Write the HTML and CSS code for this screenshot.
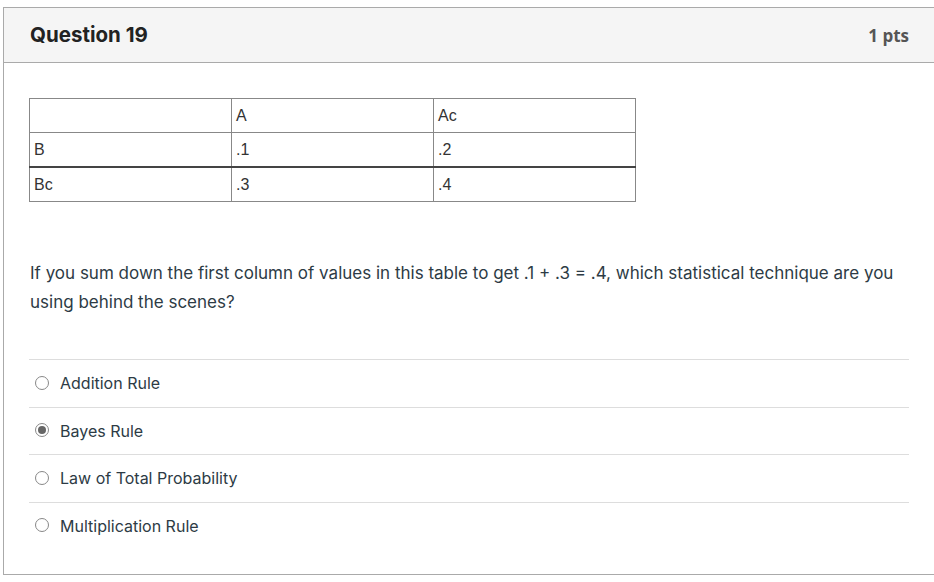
FILE: index.html
```html
<!DOCTYPE html>
<html>
<head>
<meta charset="utf-8">
<link rel="stylesheet" href="styles.css">
</head>
<body>
<div class="question">
  <div class="q-header">
    <span class="q-title">Question 19</span>
    <span class="q-pts">1 pts</span>
  </div>
  <div class="q-body">
    <table class="grid">
      <tr><td></td><td>A</td><td>Ac</td></tr>
      <tr class="mid"><td>B</td><td>.1</td><td>.2</td></tr>
      <tr><td>Bc</td><td>.3</td><td>.4</td></tr>
    </table>
    <p class="q-text">If you sum down the first column of values in this table to get .1 + .3 = .4, which statistical technique are you using behind the scenes?</p>
    <div class="answers">
      <label class="answer"><span class="radio"></span>Addition Rule</label>
      <label class="answer"><span class="radio checked"></span>Bayes Rule</label>
      <label class="answer"><span class="radio"></span>Law of Total Probability</label>
      <label class="answer"><span class="radio"></span>Multiplication Rule</label>
    </div>
  </div>
</div>
</body>
</html>
```
FILE: styles.css
```css
html, body {
  margin: 0;
  padding: 0;
  background: #fff;
}
body {
  padding: 7px 0 0 3px;
  font-family: Inter, "Open Sans", "Liberation Sans", sans-serif;
  color: #2d3b45;
  overflow: hidden;
}
.question {
  width: 931px;
  border: 1px solid #aaa;
  box-sizing: content-box;
}
.q-header {
  height: 54px;
  background: #f5f5f5;
  border-bottom: 1px solid #aaa;
  display: flex;
  align-items: center;
  justify-content: space-between;
  padding: 0 26px 0 26px;
}
.q-title {
  font-weight: 700;
  font-size: 20.5px;
  color: #222;
  margin-top: -2px;
}
.q-pts {
  font-family: "Open Sans", sans-serif;
  font-weight: 700;
  font-size: 17px;
  color: #555;
}
.q-body {
  padding: 35px 25px 25px 25px;
}
.grid {
  border-collapse: collapse;
  width: 607px;
  font-family: "Liberation Sans", Arial, sans-serif;
  font-size: 16px;
  color: #333;
}
.grid td {
  border: 1px solid #888;
  height: 33px;
  padding: 0 0 0 4px;
  width: 33.3%;
  vertical-align: middle;
}
.grid tr.mid td {
  border-bottom: 2px solid #444;
}
.q-text {
  margin: 57px 0 0 1px;
  font-size: 17px;
  line-height: 29px;
  color: #2d3b45;
  width: 875px;
}
.answers {
  margin-top: 42px;
  width: 880px;
}
.answer {
  display: flex;
  align-items: center;
  height: 46.5px;
  border-top: 1px solid #ddd;
  font-size: 16px;
  color: #2d3b45;
  padding-left: 6px;
}
.radio {
  width: 12px;
  height: 12px;
  border: 1.5px solid #888;
  border-radius: 50%;
  margin-right: 11px;
  margin-top: -1px;
  box-sizing: content-box;
  position: relative;
}
.radio.checked::after {
  content: "";
  position: absolute;
  left: 2px;
  top: 2px;
  width: 8px;
  height: 8px;
  border-radius: 50%;
  background: #666;
}
```
